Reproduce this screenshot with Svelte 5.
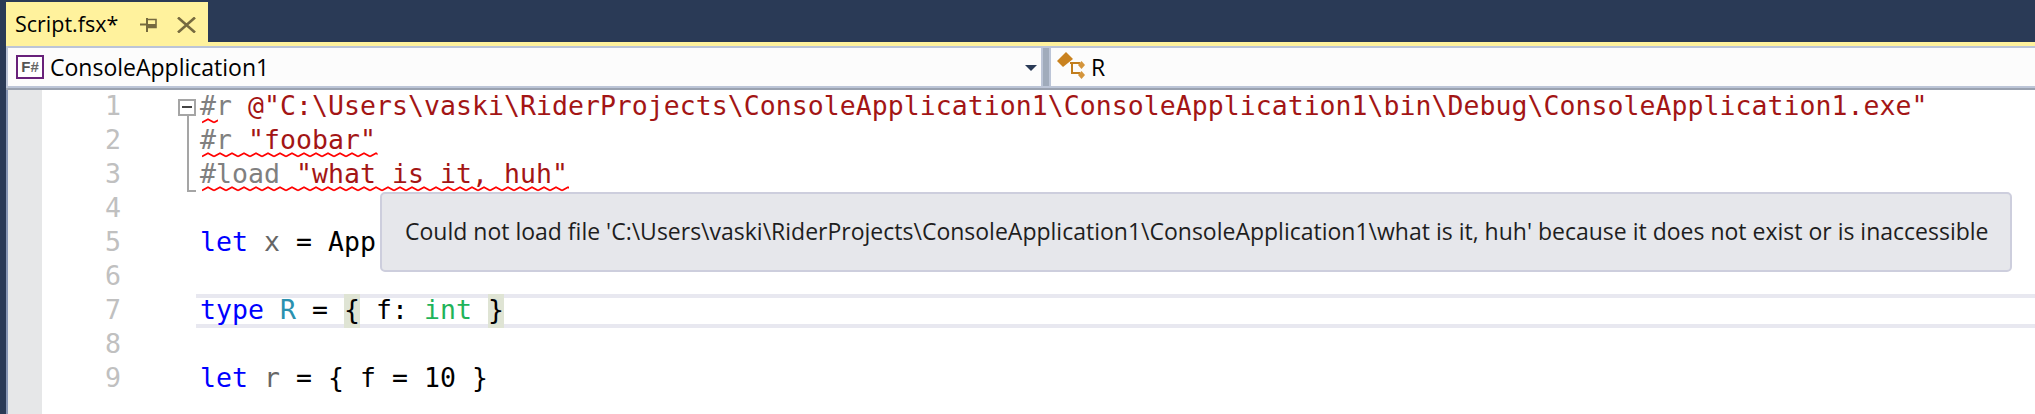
<script lang="ts">
  // 行データ: 各トークンは [クラス, 文字列]
  type Tok = [string, string];
  const lines: { toks: Tok[]; squiggle?: number; current?: boolean }[] = [
    {
      toks: [
        ['pp', '#r'],
        ['', ' '],
        ['str', '@"C:\\Users\\vaski\\RiderProjects\\ConsoleApplication1\\ConsoleApplication1\\bin\\Debug\\ConsoleApplication1.exe"'],
      ],
      squiggle: 1,
    },
    { toks: [['pp', '#r'], ['', ' '], ['str', '"foobar"']], squiggle: 11 },
    { toks: [['pp', '#load'], ['', ' '], ['str', '"what is it, huh"']], squiggle: 23 },
    { toks: [] },
    { toks: [['kw', 'let'], ['', ' '], ['id', 'x'], ['', ' = App']] },
    { toks: [] },
    {
      toks: [
        ['kw', 'type'],
        ['', ' '],
        ['ty', 'R'],
        ['', ' = '],
        ['brace', '{'],
        ['', ' f: '],
        ['prim', 'int'],
        ['', ' '],
        ['brace', '}'],
      ],
      current: true,
    },
    { toks: [] },
    { toks: [['kw', 'let'], ['', ' '], ['id', 'r'], ['', ' = { f = 10 }']] },
  ];

  const CH = 15.96;
</script>

<div class="ide">
  <div class="tabbar">
    <div class="tab">
      <span class="tab-title">Script.fsx*</span>
      <svg class="pin" width="17" height="14" viewBox="0 0 17 14">
        <path d="M0 6.5h7M7 0v14" stroke="#766a3f" stroke-width="2" fill="none" />
        <path d="M7 1.5h9v8h-9z" stroke="#766a3f" stroke-width="1.6" fill="none" />
        <path d="M7 6h9v4h-9z" fill="#766a3f" />
      </svg>
      <svg class="close" width="19" height="16" viewBox="0 0 19 16">
        <path d="M1 0.5l17 15M18 0.5l-17 15" stroke="#766a3f" stroke-width="2.6" fill="none" />
      </svg>
    </div>
  </div>
  <div class="accent"></div>

  <div class="navbar">
    <div class="nav left">
      <span class="fs-icon"><b class="fs-f">F</b>#</span>
      <span class="nav-label">ConsoleApplication1</span>
      <span class="arrow"></span>
    </div>
    <div class="nav-sep"></div>
    <div class="nav right">
      <svg class="member" width="30" height="28" viewBox="0 0 30 28">
        <path d="M1 10L10 1l7 7-10 8z" fill="#c9821f" />
        <path d="M14 12h10M16 12v10h8" stroke="#c17d1c" stroke-width="2" fill="none" />
        <path d="M25.5 10l3.5 4-3.5 4-3.5-4zM25.5 20l3.5 4-3.5 4-3.5-4z" fill="#d4953c" />
      </svg>
      <span class="nav-label">R</span>
    </div>
  </div>

  <div class="editor">
    <div class="margin"></div>
    <div class="gutter">
      {#each lines as _l, i (i)}
        <div class="num">{i + 1}</div>
      {/each}
    </div>
    <div class="outline">
      <span class="fold"><i></i></span>
      <span class="fold-line"></span>
    </div>
    <div class="code">
      {#each lines as line, i (i)}
        <div class="line" class:current={line.current}>
          {#each line.toks as tok, j (j)}<span class={tok[0]}>{tok[1]}</span>{/each}
          {#if line.squiggle}
            <svg class="squiggle" width={line.squiggle * CH} height="6">
              <defs>
                <pattern id="w{i}" width="12" height="6" patternUnits="userSpaceOnUse">
                  <path d="M0 4.5 L6 1.2 L12 4.5" stroke="#ff0000" stroke-width="1.6" fill="none" />
                </pattern>
              </defs>
              <rect width="100%" height="6" fill="url(#w{i})" />
            </svg>
          {/if}
        </div>
      {/each}
    </div>

    <div class="tooltip">
      Could not load file 'C:\Users\vaski\RiderProjects\ConsoleApplication1\ConsoleApplication1\what is it, huh' because it does not exist or is inaccessible
    </div>
  </div>
</div>

<style>
  :global(body) {
    margin: 0;
    background: #fff;
    overflow: hidden;
  }

  .ide {
    width: 2035px;
    height: 414px;
    overflow: hidden;
    background: #2a3a56;
    display: flex;
    flex-direction: column;
    font-family: 'Open Sans', 'Noto Sans', sans-serif;
  }

  .tabbar {
    height: 40px;
    padding: 2px 0 0 6px;
    display: flex;
  }

  .tab {
    width: 202px;
    background: #fff29d;
    display: flex;
    align-items: center;
    padding-left: 9px;
    box-sizing: border-box;
    color: #000;
  }

  .tab-title {
    font-size: 21.5px;
    width: 125px;
    margin-top: 2px;
  }

  .pin {
    margin: 5px 20px 0 0;
  }

  .close {
    margin-top: 5px;
  }

  .accent {
    height: 4px;
    margin-left: 6px;
    background: #fff29d;
  }

  .navbar {
    height: 44px;
    margin-left: 6px;
    box-sizing: border-box;
    padding: 2px 0 2px 2px;
    border-bottom: 2px solid #9aa2b0;
    display: flex;
    background: #bcc5d7;
  }

  .nav {
    background: #fcfcfc;
    display: flex;
    align-items: center;
    height: 38px;
  }

  .nav.left {
    width: 1033px;
    position: relative;
  }

  .nav-sep {
    width: 6px;
    height: 38px;
    margin: 0 2px;
    background: #a0abbb;
  }

  .nav.right {
    flex: 1;
    padding-left: 5px;
    gap: 5px;
  }

  .member {
    margin-bottom: 4px;
  }

  .fs-icon {
    margin: 0 6px 0 8px;
    width: 28px;
    height: 24px;
    box-sizing: border-box;
    border: 2px solid #68217a;
    font-family: 'Liberation Sans', sans-serif;
    font-size: 15px;
    font-weight: bold;
    line-height: 19px;
    text-align: center;
    color: #666;
    background: #fff;
  }

  .fs-f {
    color: #555;
  }

  .nav-label {
    font-size: 23px;
    color: #000;
  }

  .arrow {
    position: absolute;
    right: 4px;
    top: 17px;
    border-left: 6px solid transparent;
    border-right: 6px solid transparent;
    border-top: 6px solid #2a3a56;
  }

  .editor {
    flex: 1;
    margin-left: 6px;
    border-left: 2px solid #8796b4;
    background: #fff;
    display: flex;
    position: relative;
  }

  .margin {
    width: 34px;
    background: #e6e7e8;
  }

  .gutter {
    width: 79px;
    text-align: right;
    font-family: 'DejaVu Sans Mono', monospace;
    font-size: 26.6px;
    color: #c0c0c0;
  }

  .num {
    height: 34px;
    line-height: 32px;
  }

  .outline {
    width: 75px;
    position: relative;
  }

  .fold {
    position: absolute;
    left: 57px;
    top: 9px;
    width: 18px;
    height: 17px;
    box-sizing: border-box;
    border: 2px solid #a5a5a5;
    background: #fff;
  }

  .fold i {
    position: absolute;
    left: 2px;
    top: 5px;
    width: 10px;
    height: 2px;
    background: #444;
  }

  .fold-line {
    position: absolute;
    left: 66px;
    top: 26px;
    width: 9px;
    height: 76px;
    box-sizing: border-box;
    border-left: 2px solid #a5a5a5;
    border-bottom: 2px solid #a5a5a5;
  }

  .code {
    flex: 1;
    font-family: 'DejaVu Sans Mono', monospace;
    font-size: 26.5px;
    letter-spacing: 0.04px;
    color: #000;
  }

  .line {
    height: 34px;
    line-height: 32px;
    white-space: pre;
    padding-left: 4px;
    position: relative;
  }

  .line.current {
    box-shadow: inset 0 4px 0 #e8e8f0, inset 0 -4px 0 #e8e8f0;
  }

  .squiggle {
    position: absolute;
    left: 6px;
    top: 28px;
  }

  .pp {
    color: #808080;
  }

  .str {
    color: #a31515;
  }

  .kw {
    color: #0000ff;
  }

  .id {
    color: #666;
  }

  .ty {
    color: #2b91af;
  }

  .prim {
    color: #1fb45a;
  }

  .brace {
    display: inline-block;
    height: 34px;
    background: #dfe4d4;
  }

  .tooltip {
    position: absolute;
    left: 372px;
    top: 102px;
    width: 1632px;
    height: 80px;
    box-sizing: border-box;
    background: #e6e7eb;
    border: 2px solid #cdcedd;
    border-radius: 5px;
    padding-left: 23px;
    font-size: 23px;
    line-height: 74px;
    color: #1e1e1e;
    white-space: nowrap;
  }
</style>
